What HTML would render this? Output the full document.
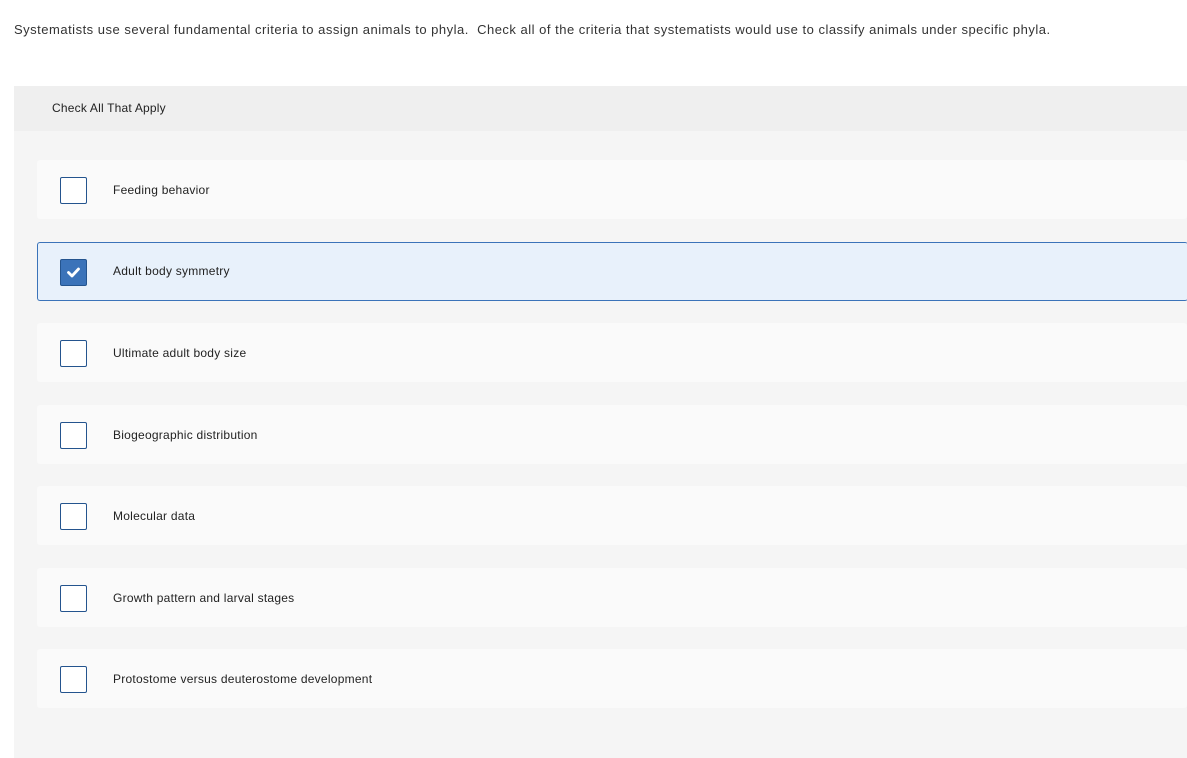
<!DOCTYPE html>
<html><head><style>
body{margin:0;width:1187px;height:758px;background:#fff;font-family:"Liberation Sans",sans-serif;color:#222;overflow:hidden;position:relative}
.q{position:absolute;left:14px;top:22px;font-size:13px;color:#333;letter-spacing:0.5px}
.box{position:absolute;left:14px;top:86px;width:1173px;height:672px;background:#f5f5f5}
.hdr{position:absolute;left:0;top:0;width:1173px;height:45px;background:#efefef;font-size:12px;line-height:45px;padding-left:38px;box-sizing:border-box;letter-spacing:0.2px}
.it{position:absolute;left:23px;width:1150px;height:59px;background:#fafafa;border-radius:3px}
.it.sel{background:#e8f1fb;border:1px solid #3b73b9;height:57px;border-right:none}
.cb{position:absolute;left:23px;top:17px;width:25px;height:25px;border:1px solid #24548e;border-radius:2px;background:#fff;box-sizing:content-box}
.sel .cb{background:#3b73b9;left:22px;top:16px}
.t{position:absolute;left:76px;top:1px;line-height:59px;font-size:12px;color:#222;letter-spacing:0.25px}
.sel .t{left:75px;line-height:57px;top:0}
</style></head><body>
<div class="q">Systematists use several fundamental criteria to assign animals to phyla.&nbsp; Check all of the criteria that systematists would use to classify animals under specific phyla.</div>
<div class="box">
<div class="hdr">Check All That Apply</div>
<div class="it" style="top:74px"><div class="cb"></div><div class="t">Feeding behavior</div></div>
<div class="it sel" style="top:156px"><div class="cb"><svg width="25" height="25" viewBox="0 0 25 25"><path d="M7.5 12.5l3.5 3.5 6.5-7" stroke="#fff" stroke-width="2.8" fill="none" stroke-linecap="round" stroke-linejoin="round"/></svg></div><div class="t">Adult body symmetry</div></div>
<div class="it" style="top:237px"><div class="cb"></div><div class="t">Ultimate adult body size</div></div>
<div class="it" style="top:319px"><div class="cb"></div><div class="t">Biogeographic distribution</div></div>
<div class="it" style="top:400px"><div class="cb"></div><div class="t">Molecular data</div></div>
<div class="it" style="top:482px"><div class="cb"></div><div class="t">Growth pattern and larval stages</div></div>
<div class="it" style="top:563px"><div class="cb"></div><div class="t">Protostome versus deuterostome development</div></div>
</div>
</body></html>
